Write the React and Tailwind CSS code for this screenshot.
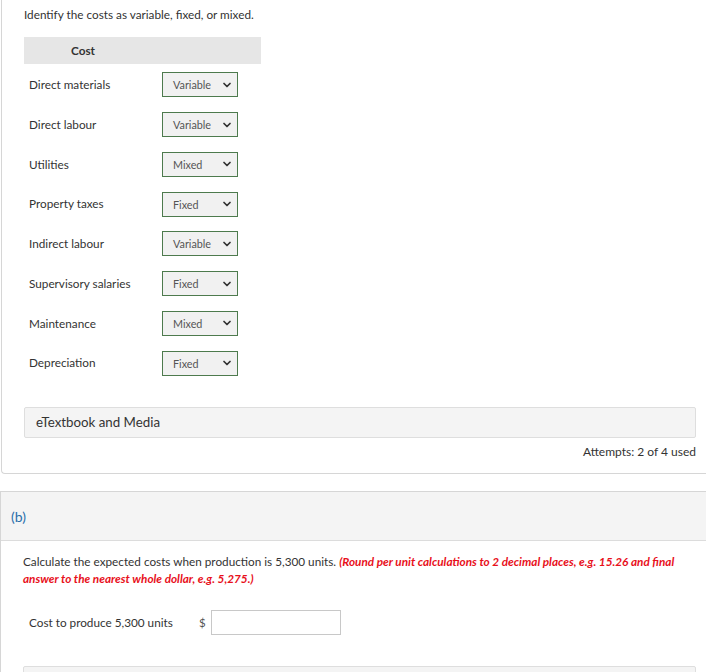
import { ChevronDown } from 'lucide-react';

const ROWS = [
  ['Direct materials', 'Variable'],
  ['Direct labour', 'Variable'],
  ['Utilities', 'Mixed'],
  ['Property taxes', 'Fixed'],
  ['Indirect labour', 'Variable'],
  ['Supervisory salaries', 'Fixed'],
  ['Maintenance', 'Mixed'],
  ['Depreciation', 'Fixed'],
];

function FakeSelect({ value }) {
  return (
    <div className="w-[76px] h-[25px] border border-[#4d7a4d] bg-[#f1f1f1] flex items-center justify-between pl-[10px] pr-[4px]">
      <span className="text-[10.8px] text-[#555] pt-px">{value}</span>
      <ChevronDown size={12} strokeWidth={3.5} className="text-[#333]" />
    </div>
  );
}

export default function App() {
  return (
    <div className="w-[706px] h-[672px] overflow-hidden bg-white text-[#333] font-['Lato',sans-serif]">
      <section className="ml-px -mt-2 border-l border-b border-[#d6d6d6] rounded-bl-[4px] pt-[15px] pb-[13px]">
        <p className="ml-[22px] text-[11.75px] leading-[16px]">Identify the costs as variable, fixed, or mixed.</p>

        <div className="ml-[22px] mt-[14px] w-[237px]">
          <div className="grid grid-cols-[118px_1fr] h-[27px] bg-[#e6e6e6] items-center">
            <span className="text-center text-[11.75px] font-bold">Cost</span>
            <span />
          </div>
          {ROWS.map(([label, value]) => (
            <div key={label} className="grid grid-cols-[138px_1fr] h-[39.75px] items-center pt-[2px]">
              <span className="pl-[5px] text-[11.75px]">{label}</span>
              <FakeSelect value={value} />
            </div>
          ))}
        </div>

        <div className="ml-[22px] mr-[10px] mt-[25px] h-[31px] bg-[#f4f4f4] border border-[#dedede] rounded-[2px] flex items-center pl-[11px]">
          <span className="text-[13.3px]">eTextbook and Media</span>
        </div>

        <p className="mt-[6px] mr-[10px] text-right text-[12px] leading-[16px]">Attempts: 2 of 4 used</p>
      </section>

      <section className="mt-[17px] border-l border-t border-[#d6d6d6]">
        <div className="h-[49px] bg-[#f4f4f4] border-b border-[#dcdcdc] flex items-center pl-[10px]">
          <span className="text-[14px] text-[#2a6fab]">(b)</span>
        </div>

        <p className="ml-[22px] mr-[20px] mt-[12px] text-[11.75px] leading-[17px]">
          Calculate the expected costs when production is 5,300 units.{' '}
          <span className="text-[#e8101b] font-bold italic">
            (Round per unit calculations to 2 decimal places, e.g. 15.26 and final answer to the nearest whole dollar, e.g. 5,275.)
          </span>
        </p>

        <div className="ml-[28px] mt-[23px] flex items-center">
          <span className="w-[170px] text-[11.75px]">Cost to produce 5,300 units</span>
          <span className="w-[12px] text-[11.5px] text-[#555]">$</span>
          <div className="w-[130px] h-[25px] border border-[#c8c8c8] bg-white" />
        </div>

        <div className="ml-[22px] mr-[10px] mt-[31px] h-[30px] bg-[#f4f4f4] border border-[#dedede] rounded-[2px]" />
      </section>
    </div>
  );
}
